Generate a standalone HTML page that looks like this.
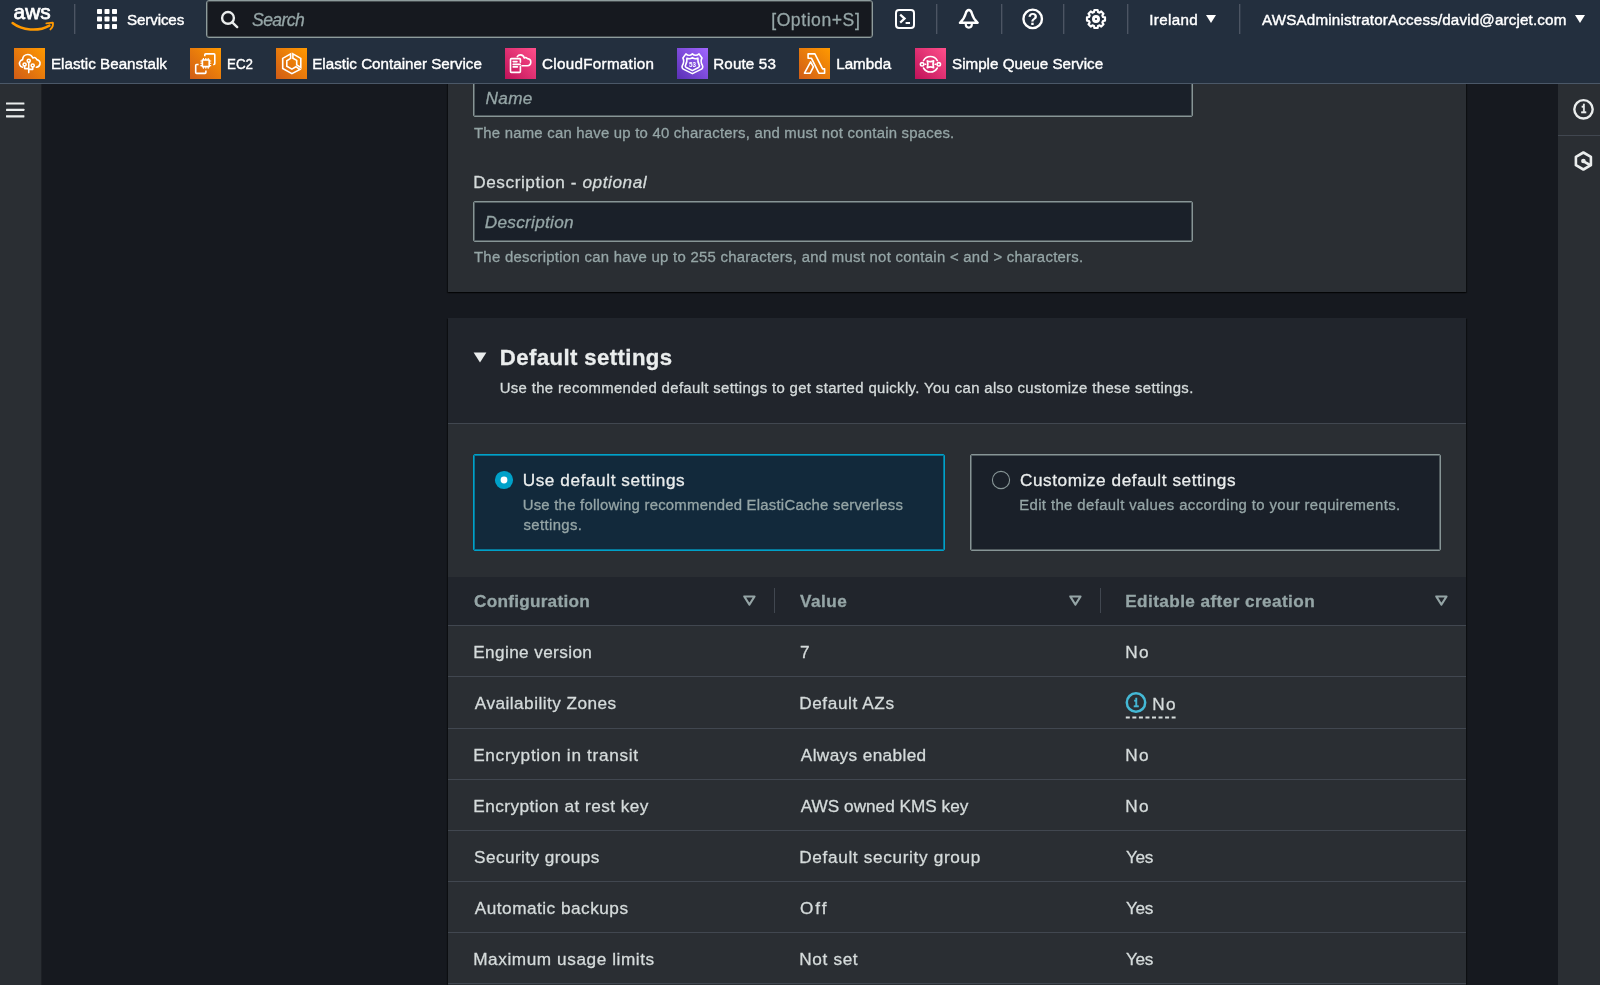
<!DOCTYPE html>
<html lang="en">
<head>
<meta charset="utf-8">
<title>ElastiCache - Create cache</title>
<style>
*{box-sizing:border-box;margin:0;padding:0}
html,body{width:1600px;height:985px;overflow:hidden;background:#16191f;font-family:"Liberation Sans",sans-serif;color:#d5dbdb}
#root{position:absolute;left:0;top:0;width:1600px;height:985px;overflow:hidden;will-change:transform}
.abs{position:absolute}
.t{position:absolute;white-space:nowrap;line-height:1;-webkit-text-stroke:.3px currentColor}
/* ---------- global nav ---------- */
#nav{position:absolute;left:0;top:0;width:1600px;height:84px;background:#232f3e;border-bottom:1px solid #4b5868;z-index:10}
#nav .div{position:absolute;top:4px;width:1px;height:30px;background:#4c5563;box-shadow:1px 0 0 rgba(76,85,99,.35)}
#search{position:absolute;left:206px;top:0;width:667px;height:38px;background:#16191f;border:1px solid #8e9c9c;border-radius:3px;box-shadow:inset 0 0 0 1px rgba(142,156,156,.4)}
.nt{color:#fff;font-size:15.2px;-webkit-text-stroke:.4px #fff}
.fav{position:absolute;top:48px;width:31px;height:31px}
.ft{top:56px;font-size:15.2px;color:#fff;-webkit-text-stroke:.4px #fff}
/* ---------- app layout ---------- */
#side{position:absolute;left:0;top:84px;width:42px;height:901px;background:#2a2e33;border-right:1px solid #1d2025}
#tools{position:absolute;left:1558px;top:84px;width:42px;height:901px;background:#2a2e33}
#tools .sep{position:absolute;left:0;top:51px;width:42px;height:1px;background:#414750}
.box{position:absolute;left:448px;width:1018px;background:#2a2e33;box-shadow:0 1px 1px 0 rgba(0,0,0,.4),1px 1px 1px 0 rgba(0,0,0,.4),-1px 1px 1px 0 rgba(0,0,0,.4)}
.inp{position:absolute;left:473px;width:720px;height:41px;background:#1a2029;border:1px solid #879596;border-radius:2px;box-shadow:inset 0 0 0 1px rgba(135,149,150,.5)}
.ph{font-style:italic;color:#95a5a6;font-size:17.2px}
.hint{color:#95a5a6;font-size:14.9px}
.lbl{color:#d5dbdb;font-size:17.2px}
.tile{position:absolute;top:454px;height:97px;border-radius:2px}
.tt{font-size:17.2px;color:#eaeded}
.td{font-size:14.9px;color:#95a5a6}
.th{font-size:17.2px;font-weight:bold;color:#95a5a6;top:592px}
.c{font-size:17.2px;color:#d5dbdb}
.rl{position:absolute;left:448px;width:1018px;height:1px;background:#414750}
</style>
</head>
<body>
<div id="root">
<!-- left navigation (collapsed) -->
<div id="side">
  <svg class="abs" style="left:6px;top:16.5px" width="19" height="17" viewBox="0 0 19 17" fill="#eaeded">
    <rect x="0" y="1.4" width="18.4" height="2.2" rx=".4"/><rect x="0" y="7.8" width="18.4" height="2.2" rx=".4"/><rect x="0" y="14.2" width="18.4" height="2.2" rx=".4"/>
  </svg>
</div>
<!-- right tools (collapsed) -->
<div id="tools">
  <svg class="abs" style="left:14px;top:14px" width="23" height="23" viewBox="0 0 23 23">
    <circle cx="11.5" cy="11.3" r="9.2" fill="none" stroke="#eaeded" stroke-width="2.4"/>
    <text x="0" y="15.5" text-anchor="middle" transform="translate(11.7 0) scale(.74 1)" font-family="Liberation Mono, monospace" font-weight="bold" font-size="12" fill="#eaeded" stroke="#eaeded" stroke-width=".7">i</text>
  </svg>
  <div class="sep"></div>
  <svg class="abs" style="left:14px;top:65px" width="23" height="24" viewBox="0 0 23 24" fill="none" stroke="#eaeded" stroke-width="2.6" stroke-linejoin="round">
    <path d="M11.4 3.5L18.9 7.8V16.2L11.4 20.5L3.9 16.2V7.8Z"/>
    <circle cx="11.4" cy="12" r="1.6" fill="#eaeded" stroke-width="1.4"/>
    <path d="M12.4 12.8L18 16" stroke-width="2.6"/>
  </svg>
</div>

<!-- container 1 : cache settings (scrolled) -->
<div class="box" style="top:40px;height:252px"></div>
<div class="inp" style="top:76px"></div>
<span class="t ph" id="b_ph1" style="left:485.5px;top:90px;letter-spacing:0.333px">Name</span>
<span class="t hint" id="b_h1" style="left:474px;top:126px;letter-spacing:0.228px">The name can have up to 40 characters, and must not contain spaces.</span>
<span class="t lbl" id="b_l2" style="left:473.2px;top:174.01px;letter-spacing:0.571px">Description - <i>optional</i></span>
<div class="inp" style="top:201px"></div>
<span class="t ph" id="b_ph2" style="left:484.7px;top:214.01px;letter-spacing:0.3px">Description</span>
<span class="t hint" id="b_h2" style="left:474px;top:250px;letter-spacing:0.279px">The description can have up to 255 characters, and must not contain &lt; and &gt; characters.</span>

<!-- container 2 : default settings -->
<div class="box" style="top:318px;height:700px">
  <div class="abs" style="left:0;top:0;width:1018px;height:106px;background:#21252c;border-bottom:1px solid #414750"></div>
  <div class="abs" style="left:0;top:259px;width:1018px;height:48px;background:#21252c"></div>
</div>
<svg class="abs" style="left:473px;top:352px" width="14" height="11" viewBox="0 0 14 11"><path d="M.6 .6H13.4L7 10.6Z" fill="#eaeded"/></svg>
<span class="t" id="b_title" style="left:499.86px;top:347.01px;font-size:22.2px;font-weight:bold;color:#eaeded;letter-spacing:0.388px">Default settings</span>
<span class="t" id="b_desc" style="left:499.7px;top:381.01px;font-size:14.9px;color:#d5dbdb;letter-spacing:0.357px">Use the recommended default settings to get started quickly. You can also customize these settings.</span>

<!-- tiles -->
<div class="tile" style="left:473px;width:472px;background:#12293b;border:1px solid #00a1c9;box-shadow:inset 0 0 0 1px rgba(0,161,201,.65)"></div>
<svg class="abs" style="left:494px;top:470px" width="20" height="20" viewBox="0 0 20 20"><circle cx="10" cy="10" r="9.1" fill="#00a1c9"/><circle cx="10" cy="10" r="3.4" fill="#fff"/></svg>
<span class="t tt" id="t1_t" style="left:522.7px;top:472px;letter-spacing:0.58px">Use default settings</span>
<span class="t td" id="t1_d1" style="left:522.7px;top:498.01px;letter-spacing:0.235px">Use the following recommended ElastiCache serverless</span>
<span class="t td" id="t1_d2" style="left:523.5px;top:518.01px;letter-spacing:0.374px">settings.</span>
<div class="tile" style="left:970px;width:471px;background:#1a2029;border:1px solid #879596;box-shadow:inset 0 0 0 1px rgba(135,149,150,.5)"></div>
<svg class="abs" style="left:990.5px;top:470px" width="20" height="20" viewBox="0 0 20 20"><circle cx="10" cy="10" r="8.6" fill="#1a2029" stroke="#879596" stroke-width="1.1"/></svg>
<span class="t tt" id="t2_t" style="left:1020px;top:472px;letter-spacing:0.56px">Customize default settings</span>
<span class="t td" id="t2_d1" style="left:1019.2px;top:498.01px;letter-spacing:0.388px">Edit the default values according to your requirements.</span>

<!-- table header -->
<span class="t th" id="th1" style="left:474px;margin-top:1px;letter-spacing:0.25px">Configuration</span>
<span class="t th" id="th2" style="left:800px;margin-top:1px;letter-spacing:0.5px">Value</span>
<span class="t th" id="th3" style="left:1125.2px;margin-top:1px;letter-spacing:0.409px">Editable after creation</span>
<svg class="abs" style="left:742px;top:594px" width="15" height="13" viewBox="0 0 15 13"><path d="M2.2 2.4H12.6L7.4 10.6Z" fill="none" stroke="#95a5a6" stroke-width="2" stroke-linejoin="round"/></svg>
<svg class="abs" style="left:1068px;top:594px" width="15" height="13" viewBox="0 0 15 13"><path d="M2.2 2.4H12.6L7.4 10.6Z" fill="none" stroke="#95a5a6" stroke-width="2" stroke-linejoin="round"/></svg>
<svg class="abs" style="left:1434px;top:594px" width="15" height="13" viewBox="0 0 15 13"><path d="M2.2 2.4H12.6L7.4 10.6Z" fill="none" stroke="#95a5a6" stroke-width="2" stroke-linejoin="round"/></svg>
<div class="abs" style="left:773.5px;top:588px;width:1px;height:25px;background:#414750"></div>
<div class="abs" style="left:1099.5px;top:588px;width:1px;height:25px;background:#414750"></div>
<!-- row rules -->
<div class="rl" style="top:625px"></div>
<div class="rl" style="top:676px"></div>
<div class="rl" style="top:728px"></div>
<div class="rl" style="top:779px"></div>
<div class="rl" style="top:830px"></div>
<div class="rl" style="top:881px"></div>
<div class="rl" style="top:932px"></div>
<div class="rl" style="top:983px"></div>
<!-- rows -->
<span class="t c" id="r1a" style="left:473.2px;top:644.01px;letter-spacing:0.385px">Engine version</span>
<span class="t c" id="r1b" style="left:800px;top:644.01px;letter-spacing:0px">7</span>
<span class="t c" id="r1c" style="left:1125.2px;top:644.01px;letter-spacing:1.4px">No</span>
<span class="t c" id="r2a" style="left:474.8px;top:695px;letter-spacing:0.47px">Availability Zones</span>
<span class="t c" id="r2b" style="left:799.2px;top:695px;letter-spacing:0.6px">Default AZs</span>
<svg class="abs" style="left:1125px;top:691px" width="22" height="22" viewBox="0 0 22 22">
  <circle cx="11" cy="11.5" r="9.2" fill="none" stroke="#44b9d6" stroke-width="2.5"/>
  <text x="0" y="15.6" text-anchor="middle" transform="translate(11.2 0) scale(.74 1)" font-family="Liberation Mono, monospace" font-weight="bold" font-size="12" fill="#44b9d6" stroke="#44b9d6" stroke-width=".7">i</text>
</svg>
<span class="t c" id="r2c" style="left:1152.2px;top:696px;letter-spacing:1.4px">No</span>
<svg class="abs" style="left:1125px;top:715px" width="52" height="5" viewBox="0 0 52 5"><path d="M.8 2.5H50.6" stroke="#d5dbdb" stroke-width="1.8" stroke-dasharray="4 2.55" fill="none"/></svg>
<span class="t c" id="r3a" style="left:473.2px;top:747.01px;letter-spacing:0.7px">Encryption in transit</span>
<span class="t c" id="r3b" style="left:800.8px;top:747.01px;letter-spacing:0.384px">Always enabled</span>
<span class="t c" id="r3c" style="left:1125.2px;top:747.01px;letter-spacing:1.4px">No</span>
<span class="t c" id="r4a" style="left:473.2px;top:798.01px;letter-spacing:0.476px">Encryption at rest key</span>
<span class="t c" id="r4b" style="left:800.8px;top:798.01px;letter-spacing:0.001px">AWS owned KMS key</span>
<span class="t c" id="r4c" style="left:1125.2px;top:798.01px;letter-spacing:1.4px">No</span>
<span class="t c" id="r5a" style="left:474px;top:849px;letter-spacing:0.428px">Security groups</span>
<span class="t c" id="r5b" style="left:799.2px;top:849px;letter-spacing:0.666px">Default security group</span>
<span class="t c" id="r5c" style="left:1126px;top:849px;letter-spacing:-0.4px">Yes</span>
<span class="t c" id="r6a" style="left:474.8px;top:900.01px;letter-spacing:0.5px">Automatic backups</span>
<span class="t c" id="r6b" style="left:800px;top:900.01px;letter-spacing:2px">Off</span>
<span class="t c" id="r6c" style="left:1126px;top:900.01px;letter-spacing:-0.4px">Yes</span>
<span class="t c" id="r7a" style="left:473.2px;top:951px;letter-spacing:0.579px">Maximum usage limits</span>
<span class="t c" id="r7b" style="left:799.2px;top:951px;letter-spacing:0.667px">Not set</span>
<span class="t c" id="r7c" style="left:1126px;top:951px;letter-spacing:-0.4px">Yes</span>

<div id="nav">
  <!-- aws logo -->
  <svg class="abs" style="left:10px;top:2px" width="48" height="34" viewBox="0 0 48 34">
    <text x="3.6" y="16.7" font-family="Liberation Sans, sans-serif" font-size="20.6" fill="#fff" stroke="#fff" stroke-width=".75" textLength="37" lengthAdjust="spacingAndGlyphs">aws</text>
    <path d="M2.6 21 C12 28.4 28 30 39.4 23.6" fill="none" stroke="#f90" stroke-width="2.5" stroke-linecap="round"/>
    <path d="M36.4 21.4 L42.8 20.6 C43.4 22.8 42.2 25.8 40.4 27.4" fill="none" stroke="#f90" stroke-width="1.9" stroke-linecap="round" stroke-linejoin="round"/>
  </svg>
  <div class="div" style="left:74px"></div>
  <!-- services grid -->
  <svg class="abs" style="left:97px;top:9px" width="20" height="20" viewBox="0 0 20 20" fill="#fff">
    <rect x="0" y="0" width="5" height="5" rx=".8"/><rect x="7.5" y="0" width="5" height="5" rx=".8"/><rect x="15" y="0" width="5" height="5" rx=".8"/>
    <rect x="0" y="7.5" width="5" height="5" rx=".8"/><rect x="7.5" y="7.5" width="5" height="5" rx=".8"/><rect x="15" y="7.5" width="5" height="5" rx=".8"/>
    <rect x="0" y="15" width="5" height="5" rx=".8"/><rect x="7.5" y="15" width="5" height="5" rx=".8"/><rect x="15" y="15" width="5" height="5" rx=".8"/>
  </svg>
  <span class="t nt" id="n_services" style="left:127px;top:12px;letter-spacing:-0.14px">Services</span>
  <!-- search -->
  <div id="search"></div>
  <svg class="abs" style="left:219px;top:9px" width="22" height="22" viewBox="0 0 22 22" fill="none" stroke="#eaeded" stroke-width="2.4">
    <circle cx="9" cy="8.9" r="5.9"/><path d="M13.3 13.3 L18.2 18.1" stroke-linecap="round"/>
  </svg>
  <span class="t" id="n_search" style="left:252px;top:12px;font-size:17.6px;font-style:italic;color:#95a5a6;letter-spacing:-0.6px">Search</span>
  <span class="t" id="n_opt" style="left:771.2px;top:12px;font-size:17.6px;color:#95a5a6;letter-spacing:0.554px">[Option+S]</span>
  <!-- cloudshell -->
  <svg class="abs" style="left:894px;top:8px" width="22" height="22" viewBox="0 0 22 22" fill="none" stroke="#fff" stroke-width="2">
    <rect x="2" y="2" width="18" height="18" rx="3"/><path d="M6.2 6.6 L10.6 10.6 L6.2 14.6" stroke-width="2.2"/><path d="M11.6 15 H16" stroke-width="2"/>
  </svg>
  <div class="div" style="left:936px"></div>
  <!-- bell -->
  <svg class="abs" style="left:957px;top:7px" width="24" height="24" viewBox="0 0 24 24" fill="none" stroke="#fff" stroke-width="2.4" stroke-linejoin="round">
    <path d="M2.9 15.8C6.4 12.6 7.9 10 8.7 6.6C9.2 4.4 10.3 3 11.8 3C13.3 3 14.4 4.4 14.9 6.6C15.7 10 17.2 12.6 20.7 15.8Z"/>
    <path d="M8.7 16.6C8.7 19.3 9.9 20.7 11.8 20.7C13.7 20.7 14.9 19.3 14.9 16.6" stroke-width="2.2"/>
  </svg>
  <div class="div" style="left:1001px"></div>
  <!-- help -->
  <svg class="abs" style="left:1021px;top:8px" width="24" height="22" viewBox="0 0 24 22">
    <circle cx="11.7" cy="10.9" r="9.25" fill="none" stroke="#fff" stroke-width="2.4"/>
    <text x="11.7" y="16.9" text-anchor="middle" font-family="Liberation Sans, sans-serif" font-weight="bold" font-size="16.5" fill="#fff">?</text>
  </svg>
  <div class="div" style="left:1063px"></div>
  <!-- gear -->
  <svg class="abs" style="left:1084px;top:7px" width="24" height="24" viewBox="0 0 24 24" fill="none" stroke="#fff" stroke-linejoin="round">
    <path d="M9.99 4.98 L10.41 2.99 L13.59 2.99 L14.01 4.98 L15.54 5.62 L17.25 4.50 L19.50 6.75 L18.38 8.46 L19.02 9.99 L21.01 10.41 L21.01 13.59 L19.02 14.01 L18.38 15.54 L19.50 17.25 L17.25 19.50 L15.54 18.38 L14.01 19.02 L13.59 21.01 L10.41 21.01 L9.99 19.02 L8.46 18.38 L6.75 19.50 L4.50 17.25 L5.62 15.54 L4.98 14.01 L2.99 13.59 L2.99 10.41 L4.98 9.99 L5.62 8.46 L4.50 6.75 L6.75 4.50 L8.46 5.62Z" stroke-width="2.2"/>
    <circle cx="12" cy="12" r="2.55" stroke-width="2.9"/>
  </svg>
  <div class="div" style="left:1127px"></div>
  <span class="t nt" id="n_region" style="left:1149.26px;top:12px;letter-spacing:0.345px">Ireland</span>
  <svg class="abs" style="left:1206px;top:15px" width="10" height="8" viewBox="0 0 10 8"><path d="M0 0H10L5 8Z" fill="#fff"/></svg>
  <div class="div" style="left:1239px"></div>
  <span class="t nt" id="n_acct" style="left:1262.1px;top:12px;letter-spacing:0.152px">AWSAdministratorAccess/david@arcjet.com</span>
  <svg class="abs" style="left:1575px;top:15px" width="10" height="8" viewBox="0 0 10 8"><path d="M0 0H10L5 8Z" fill="#fff"/></svg>

  <!-- favorites bar -->
  <svg width="0" height="0" style="position:absolute">
    <defs>
      <linearGradient id="gO" x1="0" y1="1" x2="1" y2="0"><stop offset="0" stop-color="#d05c17"/><stop offset="1" stop-color="#ff9900"/></linearGradient>
      <linearGradient id="gP" x1="0" y1="1" x2="1" y2="0"><stop offset="0" stop-color="#c01259"/><stop offset="1" stop-color="#ff4f8b"/></linearGradient>
      <linearGradient id="gV" x1="0" y1="1" x2="1" y2="0"><stop offset="0" stop-color="#5a30b5"/><stop offset="1" stop-color="#a166ff"/></linearGradient>
    </defs>
  </svg>
  <!-- Elastic Beanstalk -->
  <svg class="fav" style="left:14px" viewBox="0 0 31 31" fill="none" stroke="#fff" stroke-width="1.6" stroke-linecap="round" stroke-linejoin="round">
    <rect width="31" height="31" fill="url(#gO)" stroke="none"/>
    <path d="M8.6 19.2 C5.6 18.6 4.6 15.2 6.4 13 C7 12.2 7.8 11.8 8.6 11.6 C8.8 8.6 11 6.5 13.8 6.5 C16.2 6.5 18 8 18.8 10 C20.2 9 22.2 9.6 22.8 11.6 C25.2 12 26.4 14 26 16 C25.6 18 24.2 19 22.4 19.3"/>
    <path d="M14.75 14.4V24.6M10.6 18.1V20.6H14.75M18.7 19.1V21.4H14.75"/>
    <circle cx="14.75" cy="12.8" r="1.55"/><circle cx="10.6" cy="16.5" r="1.55"/><circle cx="18.7" cy="17.5" r="1.55"/>
  </svg>
  <span class="t ft" id="f1" style="left:50.9px;letter-spacing:0.022px">Elastic Beanstalk</span>
  <!-- EC2 -->
  <svg class="fav" style="left:190px" viewBox="0 0 31 31" fill="none" stroke="#fff" stroke-width="1.6" stroke-linejoin="round">
    <rect width="31" height="31" fill="url(#gO)" stroke="none"/>
    <path d="M14.8 8.2V6.8Q14.8 5.9 15.7 5.9H23.9Q24.8 5.9 24.8 6.8V15.6Q24.8 16.5 23.9 16.5H23.2"/>
    <path d="M8.6 16.5H6.6Q5.7 16.5 5.7 17.4V24.5Q5.7 25.4 6.6 25.4H15Q15.9 25.4 15.9 24.5V22.6"/>
    <rect x="12.4" y="12" width="6.8" height="6.6"/>
    <path d="M13.4 12V9.9M15.8 12V9.9M18.2 12V9.9M13.4 18.6V20.7M15.8 18.6V20.7M18.2 18.6V20.7M12.4 13V13H10.4M12.4 15.3H10.4M12.4 17.6H10.4M19.2 13H21.2M19.2 15.3H21.2M19.2 17.6H21.2" stroke-width="1.1"/>
  </svg>
  <span class="t ft" id="f2" style="left:227px;transform:scaleX(.88);transform-origin:0 0;letter-spacing:0px">EC2</span>
  <!-- ECS -->
  <svg class="fav" style="left:276px" viewBox="0 0 31 31" fill="none" stroke="#fff" stroke-width="1.6" stroke-linejoin="miter">
    <rect width="31" height="31" fill="url(#gO)" stroke="none"/>
    <path d="M14.6 5.9L6.7 10.4V20.5L15.9 25.6L24 21.5L19.9 18.7L15.9 21.1L10.8 18.3V12.8L14.6 10.4Z"/>
    <path d="M16.9 5.9L24.8 10.4V19.5L20.7 16.9V12.4L16.9 10.2Z"/>
  </svg>
  <span class="t ft" id="f3" style="left:312.2px;letter-spacing:0px">Elastic Container Service</span>
  <!-- CloudFormation -->
  <svg class="fav" style="left:505px" viewBox="0 0 31 31" fill="none" stroke="#fff" stroke-width="1.6" stroke-linecap="round" stroke-linejoin="round">
    <rect width="31" height="31" fill="url(#gP)" stroke="none"/>
    <path d="M15.4 14.2V11.4Q15.4 10.6 14.6 10.6H6.3Q5.5 10.6 5.5 11.4V23.6Q5.5 24.4 6.3 24.4H14.6Q15.4 24.4 15.4 23.6V18.4"/>
    <path d="M8.2 13.6H12M8.2 16.4H15.2M8.2 18.9H12.4"/>
    <path d="M12.3 8.6C13 7.5 14.2 6.9 15.6 6.9C17.6 6.9 18.8 8.3 19.3 10C20.2 9.3 21.6 9.4 22.4 10.6C24.4 10.8 25.8 12.2 25.8 14.1C25.8 16.2 24.4 17.7 22.4 17.7H17"/>
  </svg>
  <span class="t ft" id="f4" style="left:542px;letter-spacing:0.306px">CloudFormation</span>
  <!-- Route 53 -->
  <svg class="fav" style="left:677px" viewBox="0 0 31 31" fill="none" stroke="#fff" stroke-width="1.6" stroke-linejoin="round">
    <rect width="31" height="31" fill="url(#gV)" stroke="none"/>
    <path d="M8.9 5.9C10.6 7.6 13.4 7.8 15.4 5.9C17.4 7.8 20.2 7.6 22 5.9L25 10C23.6 12.4 24 15 25.4 17.4C26.2 19 25.6 20.6 24 21.4L15.4 25.6L6.8 21.4C5.2 20.6 4.6 19 5.4 17.4C6.8 15 7.2 12.4 5.9 10Z"/>
    <path d="M9.9 10.2C11.6 11 13.8 10.8 15.4 9.6C17 10.8 19.2 11 20.9 10.2C20.6 12.6 21 14.8 22.2 17C22.8 18 22.4 18.9 21.4 19.5L15.4 22.6L9.4 19.5C8.4 18.9 8 18 8.6 17C9.8 14.8 10.2 12.6 9.9 10.2Z"/>
    <text x="15.4" y="18.5" text-anchor="middle" font-family="Liberation Sans, sans-serif" font-weight="bold" font-size="6.3" fill="#fff" stroke="none">53</text>
  </svg>
  <span class="t ft" id="f5" style="left:713.2px;letter-spacing:0.143px">Route 53</span>
  <!-- Lambda -->
  <svg class="fav" style="left:799px" viewBox="0 0 31 31" fill="none" stroke="#fff" stroke-width="1.6" stroke-linejoin="round">
    <rect width="31" height="31" fill="url(#gO)" stroke="none"/>
    <path d="M9.1 5.9H15.9L23.6 20.9H25.6V25.2H19.9L12.4 10.2H9.1Z"/>
    <path d="M11.6 13.8L14.4 18.9L11.2 25.2H5.5Z"/>
  </svg>
  <span class="t ft" id="f6" style="left:836.2px;letter-spacing:0px">Lambda</span>
  <!-- SQS -->
  <svg class="fav" style="left:915px" viewBox="0 0 31 31" fill="none" stroke="#fff" stroke-width="1.6" stroke-linecap="round" stroke-linejoin="round">
    <rect width="31" height="31" fill="url(#gP)" stroke="none"/>
    <path d="M8.5 12.6A7.9 7.9 0 0 1 22.3 12.6M8.5 20A7.9 7.9 0 0 0 22.3 20"/>
    <circle cx="7.1" cy="16.3" r="1.7"/><circle cx="23.8" cy="16.3" r="1.7"/>
    <path d="M12.3 12.9C14.2 13.8 16.6 13.8 18.6 12.9C17.8 15 17.8 17.6 18.6 19.7C16.6 18.8 14.2 18.8 12.3 19.7C13.1 17.6 13.1 15 12.3 12.9Z" stroke-width="1.7"/>
    <path d="M10 16.3H10.9M20 16.3H20.9" stroke-width="1.4"/>
  </svg>
  <span class="t ft" id="f7" style="left:952px;letter-spacing:0px">Simple Queue Service</span>
</div>

</div>
</body>
</html>
